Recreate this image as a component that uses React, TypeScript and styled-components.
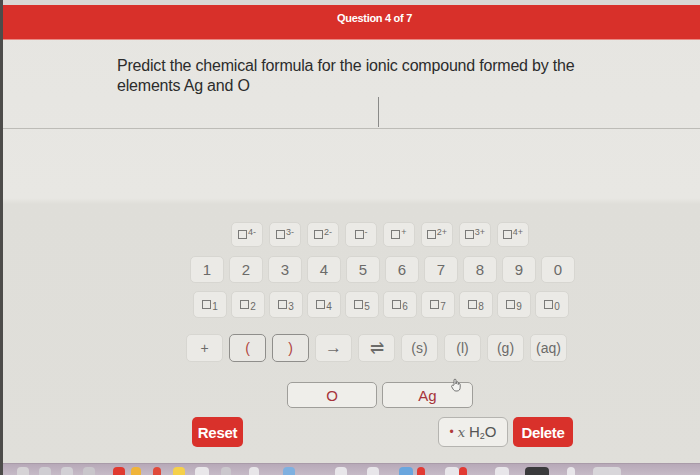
import React from "react";
import styled, { createGlobalStyle } from "styled-components";

const GlobalStyle = createGlobalStyle`
  html, body {
    margin: 0;
    padding: 0;
    background: #e3e2dd;
    font-family: "Liberation Sans", Arial, sans-serif;
  }
`;

const charges = ["4-", "3-", "2-", "-", "+", "2+", "3+", "4+"];
const digits = ["1", "2", "3", "4", "5", "6", "7", "8", "9", "0"];
const subs = ["1", "2", "3", "4", "5", "6", "7", "8", "9", "0"];
const symbols = ["+", "(", ")", "→", "⇌", "(s)", "(l)", "(g)", "(aq)"];

const dockIcons = [
  { c: "#d6d3d6", w: 12, ml: 14 },
  { c: "#cfcdd2", w: 12, ml: 10 },
  { c: "#d2d0d5", w: 12, ml: 10 },
  { c: "#c9c6cb", w: 12, ml: 10 },
  { c: "#e0392f", w: 12, ml: 18 },
  { c: "#f0b43a", w: 10, ml: 6 },
  { c: "#e04a3a", w: 8, ml: 12 },
  { c: "#f5d04a", w: 12, ml: 12 },
  { c: "#e9e7ea", w: 14, ml: 10 },
  { c: "#cbc8cd", w: 10, ml: 12 },
  { c: "#e8e6e9", w: 10, ml: 18 },
  { c: "#7fb0e0", w: 12, ml: 24 },
  { c: "#e8e6ea", w: 12, ml: 40 },
  { c: "#e8e6ea", w: 12, ml: 20 },
  { c: "#6aa6de", w: 14, ml: 20 },
  { c: "#e23a33", w: 8, ml: 4 },
  { c: "#e8e6ea", w: 14, ml: 20 },
  { c: "#e23a33", w: 8, ml: 0 },
  { c: "#e8e6ea", w: 14, ml: 28 },
  { c: "#3a3a3c", w: 24, ml: 16 },
  { c: "#e8e6ea", w: 8, ml: 18 },
  { c: "#d8d6da", w: 28, ml: 18 },
];

const App: React.FC = () => {
  return (
    <>
      <GlobalStyle />
      <Page>
        <TopStrip />
        <Header>Question 4 of 7</Header>
        <Prompt>
          Predict the chemical formula for the ionic compound formed by the
          <br />
          elements Ag and O
        </Prompt>
        <AnswerArea>
          <Caret />
        </AnswerArea>
        <Keypad>
          <Row $ml={228} $gap={6} $mt={93}>
            {charges.map((c) => (
              <Key key={c} $w={32} $h={25}>
                <Box />
                <Sup>{c}</Sup>
              </Key>
            ))}
          </Row>
          <Row $ml={187} $gap={5} $mt={9}>
            {digits.map((d) => (
              <Key key={d} $w={34} $h={27} $size={15}>
                {d}
              </Key>
            ))}
          </Row>
          <Row $ml={190} $gap={4} $mt={8}>
            {subs.map((s) => (
              <Key key={s} $w={34} $h={27}>
                <Box />
                <Sub>{s}</Sub>
              </Key>
            ))}
          </Row>
          <Row $ml={183} $gap={6} $mt={16}>
            {symbols.map((s) => (
              <Key
                key={s}
                $w={37}
                $h={28}
                $variant={s === "(" || s === ")" ? "outlined" : "light"}
                $size={s === "→" || s === "⇌" ? 17 : 14}
              >
                {s}
              </Key>
            ))}
          </Row>
          <Row $ml={284} $gap={5} $mt={20}>
            <ElementKey $w={90}>O</ElementKey>
            <ElementKey $w={91}>Ag</ElementKey>
            <HandCursor viewBox="0 0 12 14">
              <path
                d="M4 7V2.2a1 1 0 0 1 2 0V6l.2-1.4a1 1 0 0 1 2 .2V6.5a1 1 0 0 1 2 .1v2.6C10.2 11.6 9 13 7 13H6C4.6 13 3.8 12.3 3 11L1.6 8.6a1 1 0 0 1 1.6-1.1z"
                fill="#f4f4f2"
                stroke="#555"
                strokeWidth="0.8"
              />
            </HandCursor>
          </Row>
          <Row $ml={189} $gap={5} $mt={9}>
            <RedKey $w={51}>Reset</RedKey>
            <WaterKey>
              <Dot>•</Dot>
              <Var>x</Var>
              <span>
                H<WaterSub>2</WaterSub>O
              </span>
            </WaterKey>
            <RedKey $w={60}>Delete</RedKey>
          </Row>
        </Keypad>
        <Dock>
          {dockIcons.map((d, i) => (
            <DockIcon key={i} $c={d.c} $w={d.w} $ml={d.ml} />
          ))}
        </Dock>
      </Page>
    </>
  );
};

export default App;

const Page = styled.div`
  position: relative;
  width: 700px;
  height: 475px;
  box-sizing: border-box;
  border-left: 3px solid #4d4c4a;
  display: flex;
  flex-direction: column;
  overflow: hidden;
  background: linear-gradient(
    180deg,
    #e6e5e1 0px,
    #e8e7e3 198px,
    #dfded9 204px,
    #e0dfda 475px
  );
`;

const TopStrip = styled.div`
  height: 5px;
  background: #d9d7d3;
`;

const Header = styled.div`
  height: 35px;
  background: #d8302a;
  color: #fff;
  font-size: 11px;
  font-weight: 700;
  letter-spacing: -0.3px;
  display: flex;
  justify-content: center;
  padding-left: 46px;
  padding-top: 7px;
  box-sizing: border-box;
  border-bottom: 1px solid #e88a84;
`;

const Prompt = styled.div`
  margin: 16px 0 0 114px;
  font-size: 16px;
  line-height: 20px;
  color: #2c2c2c;
  letter-spacing: -0.2px;
`;

const AnswerArea = styled.div`
  position: relative;
  height: 32px;
  border-bottom: 1px solid #bdbcb7;
`;

const Caret = styled.div`
  position: absolute;
  left: 375px;
  top: 1px;
  width: 1px;
  height: 30px;
  background: #8a8a88;
`;

const Keypad = styled.div`
  display: flex;
  flex-direction: column;
`;

const Row = styled.div<{ $ml: number; $gap: number; $mt: number }>`
  position: relative;
  display: flex;
  align-items: center;
  margin-left: ${(p) => p.$ml}px;
  margin-top: ${(p) => p.$mt}px;
  gap: ${(p) => p.$gap}px;
`;

const Key = styled.div<{
  $w: number;
  $h: number;
  $variant?: "light" | "outlined";
  $size?: number;
}>`
  width: ${(p) => p.$w}px;
  height: ${(p) => p.$h}px;
  box-sizing: border-box;
  border-radius: 5px;
  display: flex;
  align-items: center;
  justify-content: center;
  font-size: ${(p) => p.$size ?? 14}px;
  color: ${(p) => (p.$variant === "outlined" ? "#b0443e" : "#6b6b69")};
  background: ${(p) => (p.$variant === "outlined" ? "#e9e8e4" : "#ebeae6")};
  border: 1px solid
    ${(p) => (p.$variant === "outlined" ? "#8f8e8b" : "#d7d6d1")};
`;

const Box = styled.span`
  display: inline-block;
  width: 9px;
  height: 9px;
  border: 1px solid #7a7a78;
  box-sizing: border-box;
`;

const Sup = styled.span`
  font-size: 9px;
  margin-left: 1px;
  align-self: flex-start;
  margin-top: 4px;
`;

const Sub = styled.span`
  font-size: 10px;
  margin-left: 1px;
  align-self: flex-end;
  margin-bottom: 5px;
`;

const ElementKey = styled.div<{ $w: number }>`
  width: ${(p) => p.$w}px;
  height: 26px;
  box-sizing: border-box;
  border-radius: 5px;
  background: #efeeea;
  border: 1px solid #9f9e9a;
  display: flex;
  align-items: center;
  justify-content: center;
  font-size: 15px;
  color: #a6343a;
`;

const HandCursor = styled.svg`
  position: absolute;
  left: 163px;
  top: -4px;
  width: 12px;
  height: 14px;
`;

const RedKey = styled.div<{ $w: number }>`
  width: ${(p) => p.$w}px;
  height: 30px;
  box-sizing: border-box;
  border-radius: 5px;
  background: #d9312b;
  color: #fff;
  font-size: 15px;
  font-weight: 700;
  letter-spacing: -0.3px;
  display: flex;
  align-items: center;
  justify-content: center;
  &:first-child {
    margin-right: 190px;
  }
`;

const WaterKey = styled.div`
  width: 70px;
  height: 30px;
  box-sizing: border-box;
  border-radius: 6px;
  background: #f0efeb;
  border: 1px solid #b5b4b0;
  display: flex;
  align-items: center;
  justify-content: center;
  gap: 4px;
  font-size: 15px;
  color: #555;
`;

const Dot = styled.span`
  color: #b03a3a;
  font-size: 12px;
`;

const Var = styled.span`
  font-family: "DejaVu Serif", "Liberation Serif", serif;
  font-style: italic;
  font-size: 13px;
  color: #666;
`;

const WaterSub = styled.sub`
  font-size: 9px;
  vertical-align: -2px;
`;

const Dock = styled.div`
  margin-top: auto;
  height: 12px;
  background: linear-gradient(180deg, #b7a9b8, #c6bac7);
  border-top: 1px solid #a99ba9;
  display: flex;
  align-items: flex-start;
  padding-top: 3px;
  box-sizing: border-box;
`;

const DockIcon = styled.div<{ $c: string; $w: number; $ml: number }>`
  width: ${(p) => p.$w}px;
  height: 12px;
  margin-left: ${(p) => p.$ml}px;
  border-radius: 4px 4px 0 0;
  background: ${(p) => p.$c};
`;
